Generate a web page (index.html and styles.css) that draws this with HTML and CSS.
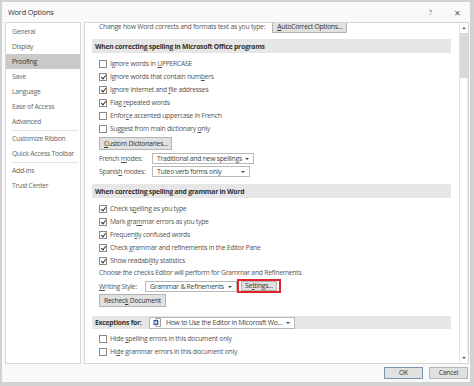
FILE: index.html
```html
<!DOCTYPE html>
<html lang="en">
<head>
  <meta charset="UTF-8" />
  <title>Word Options</title>
  <link rel="stylesheet" href="styles.css">
</head>
<body>
  <div class="window">
    <!-- Title bar -->
    <div class="titlebar">
      <span class="title">Word Options</span>
      <span class="help">?</span>
      <span class="close">✕</span>
    </div>

    <div class="main">
      <!-- Category list -->
      <ul class="nav">
        <li>General</li>
        <li>Display</li>
        <li class="active">Proofing</li>
        <li>Save</li>
        <li>Language</li>
        <li>Ease of Access</li>
        <li>Advanced</li>
        <li class="sep"></li>
        <li>Customize Ribbon</li>
        <li>Quick Access Toolbar</li>
        <li class="sep"></li>
        <li>Add-ins</li>
        <li>Trust Center</li>
      </ul>

      <!-- Proofing page -->
      <div class="panel">
        <div class="scroll">
          <div class="row first">
            <span>Change how Word corrects and formats text as you type:</span>
            <span class="btn autocorrect"><u>A</u>utoCorrect Options...</span>
          </div>

          <div class="section">When correcting spelling in Microsoft Office programs</div>
          <div class="opts">
            <div class="opt"><span class="cb"></span><span>Ignore words in <u>U</u>PPERCASE</span></div>
            <div class="opt"><span class="cb on"></span><span>Ignore words that contain num<u>b</u>ers</span></div>
            <div class="opt"><span class="cb on"></span><span>Ignore Internet and <u>f</u>ile addresses</span></div>
            <div class="opt"><span class="cb on"></span><span>Flag <u>r</u>epeated words</span></div>
            <div class="opt"><span class="cb"></span><span>Enfor<u>c</u>e accented uppercase in French</span></div>
            <div class="opt"><span class="cb"></span><span>Suggest from main dictionary <u>o</u>nly</span></div>
          </div>
          <div class="opts">
            <span class="btn dict"><u>C</u>ustom Dictionaries...</span>
          </div>
          <div class="opts">
            <div class="field">
              <span class="label">French <u>m</u>odes:</span>
              <span class="select french">Traditional and new spellings</span>
            </div>
            <div class="field">
              <span class="label">Spanis<u>h</u> modes:</span>
              <span class="select spanish">Tuteo verb forms only</span>
            </div>
          </div>

          <div class="section second">When correcting spelling and grammar in Word</div>
          <div class="opts">
            <div class="opt"><span class="cb on"></span><span>Check s<u>p</u>elling as you type</span></div>
            <div class="opt"><span class="cb on"></span><span>Mark gra<u>m</u>mar errors as you type</span></div>
            <div class="opt"><span class="cb on"></span><span>Frequen<u>t</u>ly confused words</span></div>
            <div class="opt"><span class="cb on"></span><span>Check grammar and refinements in the Editor Pane</span></div>
            <div class="opt"><span class="cb on"></span><span>Show readabi<u>l</u>ity statistics</span></div>
            <div class="note">Choose the checks Editor will perform for Grammar and Refinements</div>
            <div class="field style-row">
              <span class="label short"><u>W</u>riting Style:</span>
              <span class="select grammar">Grammar &amp; Refinements</span>
              <span class="highlight"><span class="btn settings">Se<u>t</u>tings...</span></span>
            </div>
            <span class="btn recheck">Rechec<u>k</u> Document</span>
          </div>

          <div class="section exceptions">
            <span class="label ex">Exceptions for:</span>
            <span class="select doc">
              <svg class="doc-icon" width="9" height="9" viewBox="0 0 9 9">
                <path d="M3 0.5h4.5v8h-4.5z" fill="#fff" stroke="#8a8a8a" stroke-width="0.8"/>
                <path d="M4.5 3h2M4.5 4.5h2M4.5 6h2" stroke="#9ab" stroke-width="0.7"/>
                <rect x="0.5" y="2" width="4.5" height="5" fill="#2b5797"/>
                <rect x="1.5" y="3.2" width="2.5" height="2.6" fill="#cfe0f5"/>
              </svg>
              <span>How to Use the Editor in Micorosft Wo...</span>
            </span>
          </div>
          <div class="opts last">
            <div class="opt"><span class="cb"></span><span>Hide <u>s</u>pelling errors in this document only</span></div>
            <div class="opt"><span class="cb"></span><span>Hi<u>d</u>e grammar errors in this document only</span></div>
          </div>
        </div>

        <div class="scrollbar">
          <div class="arrow up"></div>
          <div class="thumb"></div>
          <div class="track"></div>
          <div class="arrow down"></div>
        </div>
      </div>
    </div>

    <!-- Dialog buttons -->
    <div class="footer">
      <span class="btn ok">OK</span>
      <span class="btn cancel">Cancel</span>
    </div>
  </div>
</body>
</html>
```

FILE: styles.css
```css
* {
  box-sizing: border-box;
}

body {
  margin: 0;
  font-family: "Open Sans", "Noto Sans", sans-serif;
  font-size: 6.8px;
  letter-spacing: -0.25px;
  color: #555;
  background: #fff;
}

u {
  text-decoration-thickness: 0.5px;
  text-underline-offset: 1px;
}

.window {
  width: 474px;
  height: 386px;
  border-style: solid;
  border-color: #d2d2d2;
  border-width: 2px 4px 4px 2px;
  background: #f9f9f9;
  display: flex;
  flex-direction: column;
}

/* title bar */

.titlebar {
  height: 20px;
  display: flex;
  align-items: center;
  padding-left: 6px;
  color: #333;
}

.title {
  flex: 1;
  font-size: 7.4px;
  letter-spacing: -0.2px;
}

.help {
  width: 8px;
  margin-right: 17px;
  font-size: 7px;
  color: #666;
}

.close {
  width: 10px;
  margin-right: 6px;
  font-size: 8px;
  color: #555;
}

/* body */

.main {
  height: 342px;
  display: flex;
  gap: 3px;
  padding-left: 3px;
}

.nav {
  width: 76px;
  margin: 0;
  padding: 1px 0 0;
  list-style: none;
  background: #fff;
  border: 1px solid #d8d8d8;
  color: #666;
}

.nav li {
  height: 15px;
  line-height: 15px;
  padding-left: 6px;
  white-space: nowrap;
}

.nav li.active {
  background: #c9c9c9;
  color: #333;
}

.nav li.sep {
  height: 1px;
  margin: 1px 2px 0 5px;
  background: #e2e2e2;
}

.panel {
  width: 385px;
  display: flex;
  background: #fff;
  border: 1px solid #d5d5d5;
  overflow: hidden;
}

.scroll {
  width: 374px;
  padding: 0 8px 0 7px;
  overflow: hidden;
}

.row {
  height: 13px;
  display: flex;
  align-items: center;
  white-space: nowrap;
}

.row.first {
  margin-top: -3px;
  padding-left: 7px;
}

.section {
  height: 14px;
  margin-top: 6px;
  padding-left: 3px;
  display: flex;
  align-items: center;
  background: #e6e6e6;
  font-weight: bold;
  color: #333;
}

.section.second {
  margin-top: 6px;
}

.section.exceptions {
  height: 13px;
  margin-top: 9px;
}

.opts {
  padding-left: 7px;
  margin-top: 4px;
}

.opts + .opts {
  margin-top: 2px;
}

.opts.last {
  margin-top: 3px;
}

.opt {
  height: 13px;
  display: flex;
  align-items: center;
  white-space: nowrap;
}

.cb {
  position: relative;
  width: 8px;
  height: 8px;
  margin-right: 3px;
  border: 1px solid #8a8a8a;
  background: #fff;
  flex-shrink: 0;
}

.cb.on::after {
  content: "";
  position: absolute;
  left: 2px;
  top: 0;
  width: 2px;
  height: 4px;
  border: solid #333;
  border-width: 0 1px 1px 0;
  transform: rotate(40deg);
}

.note {
  height: 12px;
  line-height: 12px;
  white-space: nowrap;
}

/* buttons and dropdowns */

.btn {
  display: inline-block;
  height: 13px;
  line-height: 11px;
  padding: 0 4px;
  text-align: center;
  background: #e1e1e1;
  border: 1px solid #b4b4b4;
  color: #333;
  white-space: nowrap;
}

.autocorrect {
  width: 75px;
  margin-left: 7px;
}

.dict {
  width: 73px;
}

.recheck {
  width: 67px;
  margin-top: 1px;
}

.field {
  height: 13px;
  display: flex;
  align-items: center;
  white-space: nowrap;
}

.label {
  width: 53px;
}

.label.short {
  width: 46px;
}

.label.ex {
  width: 54px;
}

.select {
  position: relative;
  height: 11px;
  line-height: 9px;
  padding: 0 10px 0 4px;
  background: #fff;
  border: 1px solid #b8b8b8;
  color: #444;
  white-space: nowrap;
  overflow: hidden;
  font-weight: normal;
}

.select::after {
  content: "";
  position: absolute;
  right: 4px;
  top: 4px;
  border-left: 2px solid transparent;
  border-right: 2px solid transparent;
  border-top: 2px solid #444;
}

.french {
  width: 102px;
}

.spanish {
  width: 98px;
}

.style-row {
  height: 14px;
}

.grammar {
  width: 92px;
}

.doc {
  display: flex;
  align-items: center;
  width: 146px;
  height: 12px;
  padding-left: 3px;
}

.doc-icon {
  margin-right: 4px;
  flex-shrink: 0;
}

.highlight {
  display: flex;
  align-items: center;
  height: 14px;
  padding: 0 2px;
  border: 2px solid #e1232b;
}

.settings {
  width: 36px;
  height: 10px;
  line-height: 8px;
  padding: 0;
}

/* scrollbar */

.scrollbar {
  width: 9px;
  display: flex;
  flex-direction: column;
  border-left: 1px solid #e4e4e4;
  background: #fff;
}

.arrow {
  position: relative;
  height: 10px;
}

.arrow::after {
  content: "";
  position: absolute;
  left: 2px;
  top: 4px;
  border-left: 2px solid transparent;
  border-right: 2px solid transparent;
}

.arrow.up::after {
  border-bottom: 2px solid #606060;
}

.arrow.down::after {
  border-top: 2px solid #606060;
}

.thumb {
  height: 45px;
  background: #dadada;
}

.track {
  flex: 1;
  border-right: 1px solid #e8e8e8;
}

/* footer */

.footer {
  height: 18px;
  display: flex;
  justify-content: flex-end;
  align-items: flex-start;
  gap: 6px;
  padding: 3px 2px 0 0;
}

.footer .btn {
  width: 39px;
  height: 12px;
  line-height: 10px;
}

.ok {
  border-color: #7b93b3;
}
```
